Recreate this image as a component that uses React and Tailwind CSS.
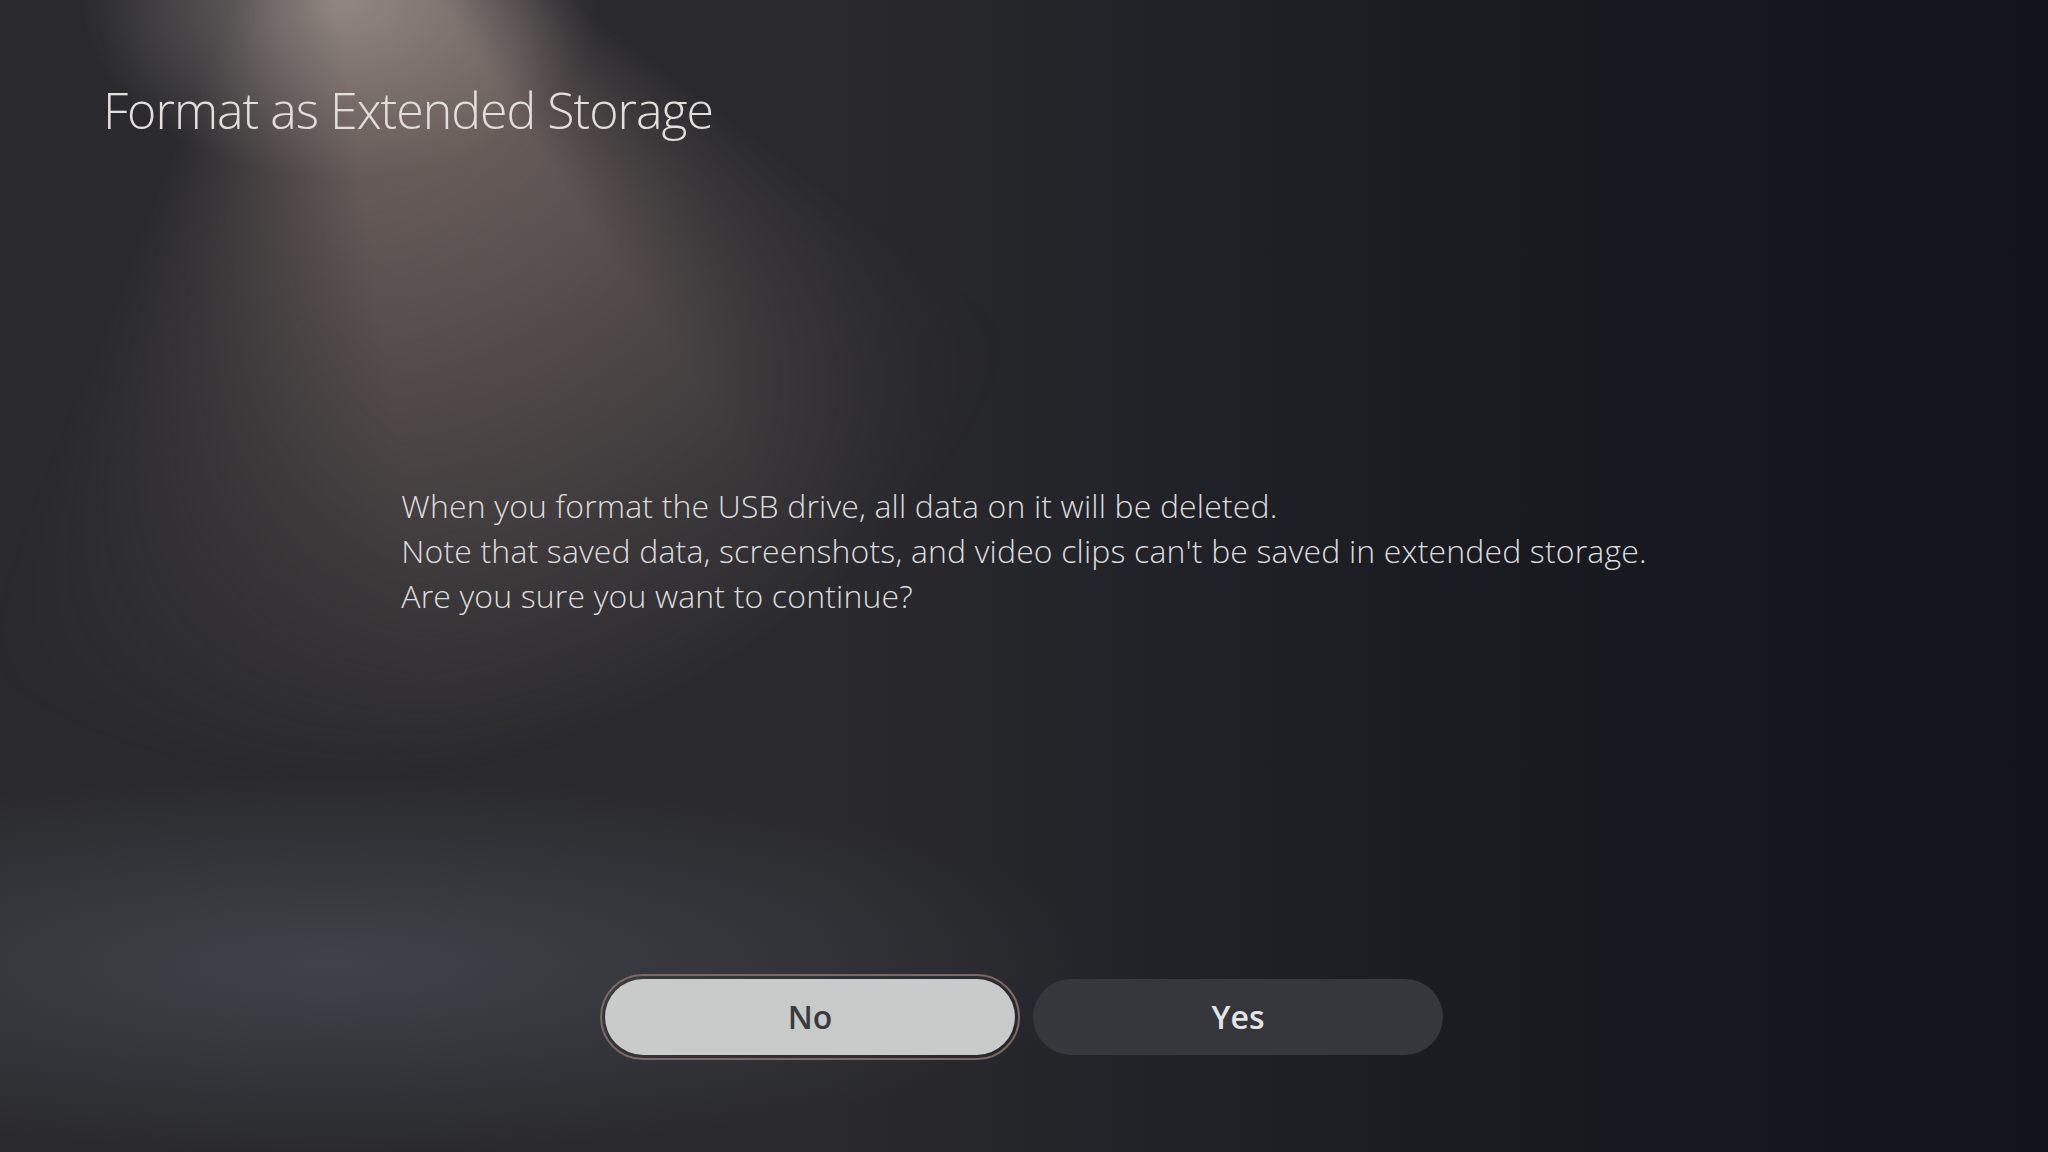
import React from 'react';

const FONT = "font-['Open_Sans','Noto_Sans',sans-serif]";

const PillButton = ({ label, focused }) => {
    if (focused) {
        return (
            <button className="w-[410px] h-[76px] rounded-full bg-[#c9cbca] text-[#3b3b3f] text-[32px] font-semibold outline-2 outline-offset-[3px] outline-[#7c6864]">
                {label}
            </button>
        );
    }
    return (
        <button className="w-[410px] h-[76px] rounded-full bg-[#36373c] text-[#e4e4e4] text-[32px] font-semibold">
            {label}
        </button>
    );
};

const App = () => {
    return (
        <div
            className={`${FONT} relative w-full h-[1152px] overflow-hidden flex flex-col bg-[#1d1e23] bg-[image:radial-gradient(ellipse_780px_190px_at_330px_965px,rgba(72,77,84,0.7),transparent_100%),linear-gradient(to_right,#2a2a2e_0%,#2a2a2e_40%,#191b21_72%,#11141b_100%)]`}
        >
            {/* spotlight beam (decoration) */}
            <div className="pointer-events-none absolute inset-0 bg-[image:radial-gradient(ellipse_260px_180px_at_340px_0px,rgba(175,164,158,0.6),transparent_100%),conic-gradient(from_0deg_at_310px_-190px,transparent_126deg,rgba(130,113,108,0.72)_146deg,rgba(124,108,103,0.72)_172deg,transparent_202deg)] [mask-image:radial-gradient(ellipse_760px_780px_at_340px_0px,black_25%,transparent_100%)]" />

            {/* Header */}
            <h1 className="relative pl-[103px] pt-[85px] text-[50px] leading-none font-light text-[#e2dedb] tracking-[-1px]">
                Format as Extended Storage
            </h1>

            {/* Message */}
            <div className="relative flex justify-center pt-[348px]">
                <div className="text-[32px] leading-[45px] font-light text-[#dcdcdc] tracking-[0.15px]">
                    <p>When you format the USB drive, all data on it will be deleted.</p>
                    <p>Note that saved data, screenshots, and video clips can't be saved in extended storage.</p>
                    <p>Are you sure you want to continue?</p>
                </div>
            </div>

            {/* Actions */}
            <div className="relative mt-auto mb-[97px] flex justify-center gap-[18px]">
                <PillButton label="No" focused />
                <PillButton label="Yes" />
            </div>
        </div>
    );
};

export default App;
